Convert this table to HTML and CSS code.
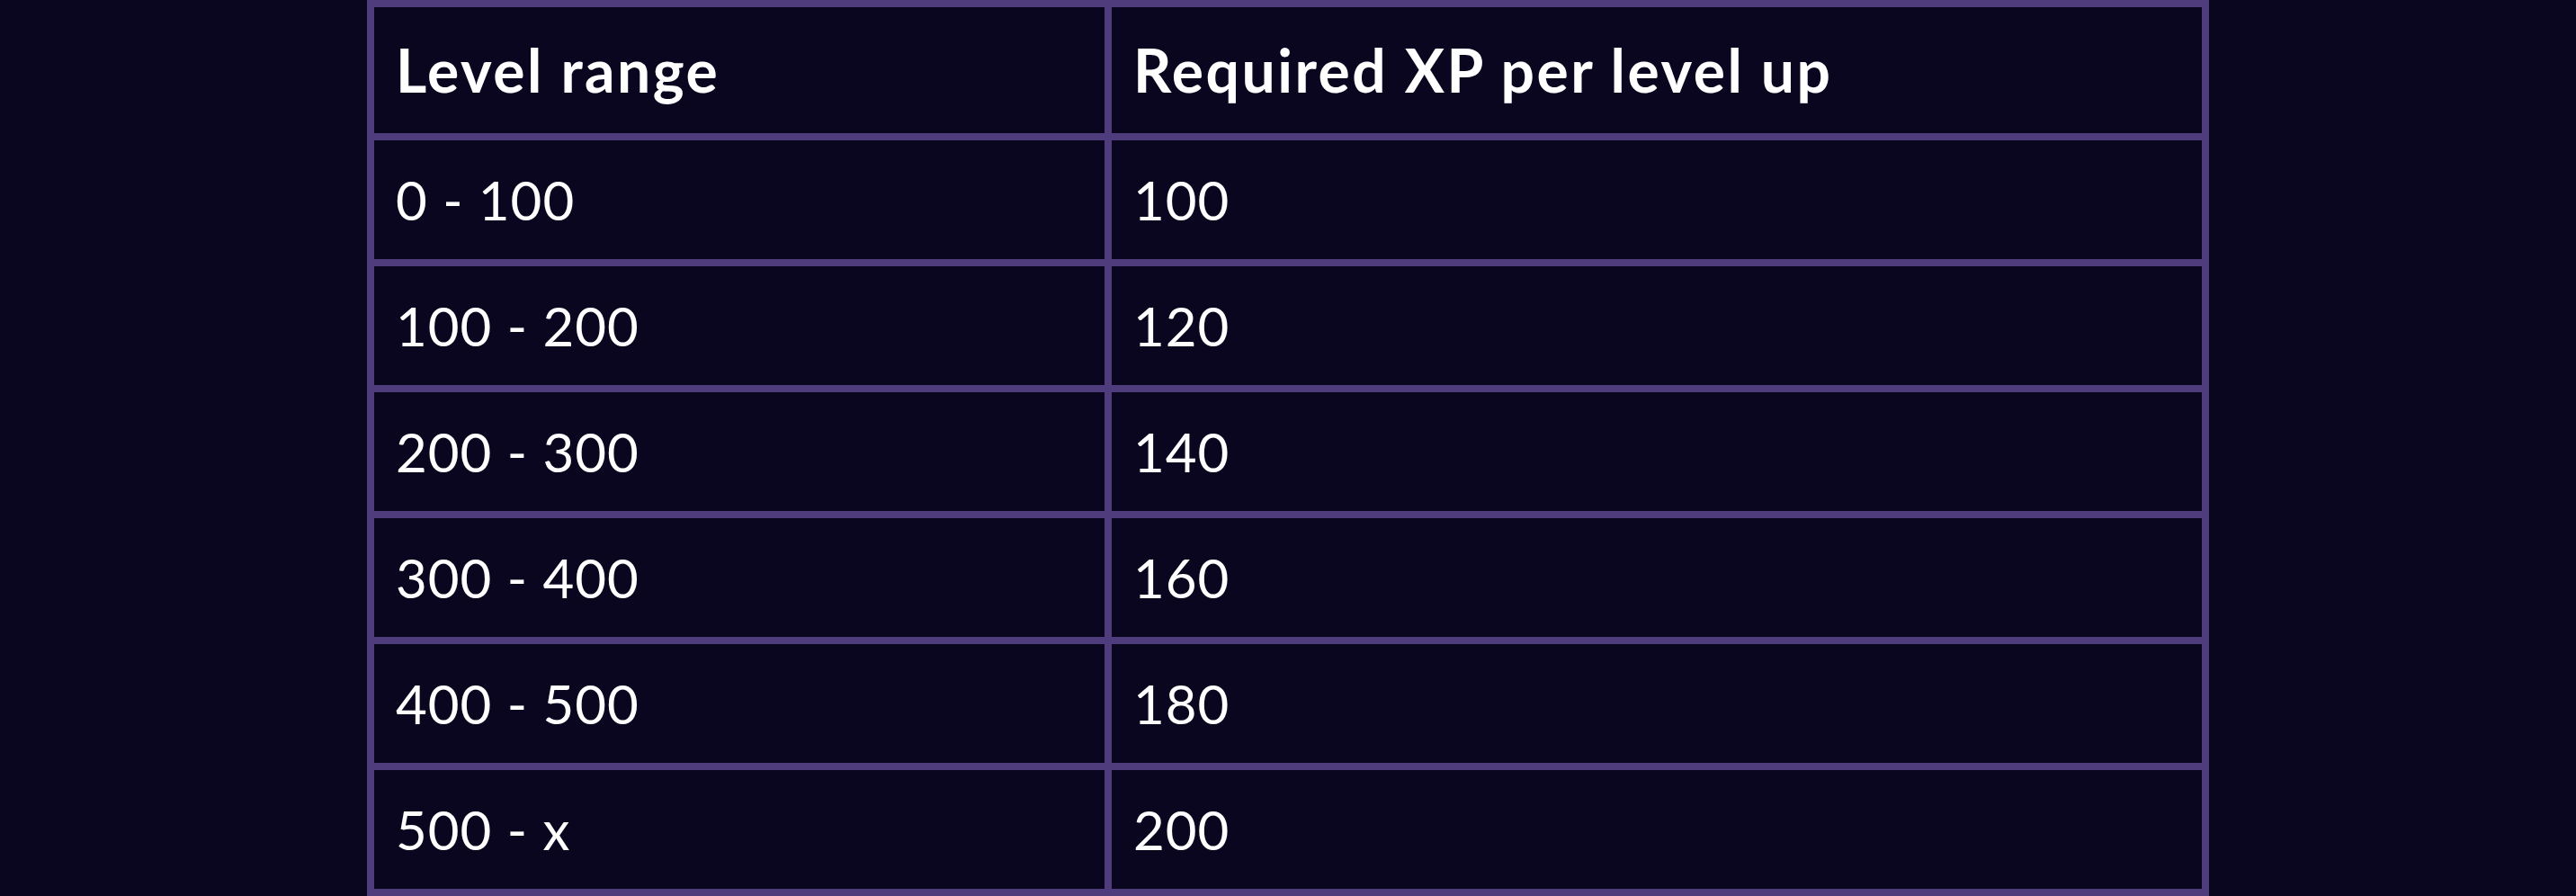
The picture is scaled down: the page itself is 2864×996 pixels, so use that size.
FILE: index.html
```html
<!DOCTYPE html>
<html lang="en">
<head>
<meta charset="utf-8">
<title>Level XP table</title>
<link rel="stylesheet" href="styles.css">
</head>
<body>
<div class="xp-table">
  <div class="cell head">Level range</div>
  <div class="cell head">Required XP per level up</div>
  <div class="cell">0 - 100</div>
  <div class="cell">100</div>
  <div class="cell">100 - 200</div>
  <div class="cell">120</div>
  <div class="cell">200 - 300</div>
  <div class="cell">140</div>
  <div class="cell">300 - 400</div>
  <div class="cell">160</div>
  <div class="cell">400 - 500</div>
  <div class="cell">180</div>
  <div class="cell">500 - x</div>
  <div class="cell">200</div>
</div>
</body>
</html>
```
FILE: styles.css
```css
html, body {
  margin: 0;
  padding: 0;
  background: #0b0620;
}
body {
  font-family: "Lato", "Liberation Sans", sans-serif;
  color: #ffffff;
}
.xp-table {
  width: 2048px;
  margin: 0 auto;
  box-sizing: border-box;
  display: grid;
  grid-template-columns: 812px 1212px;
  grid-template-rows: 140px repeat(6, 132px);
  gap: 8px;
  padding: 8px;
  background: #4e3c7c;
}
.cell {
  background: #0b0620;
  display: flex;
  align-items: center;
  padding: 0 24px;
  font-size: 60px;
  font-weight: 400;
  line-height: 1;
  letter-spacing: 1px;
}
.cell.head {
  font-size: 66px;
  font-weight: 700;
  letter-spacing: 2.5px;
}
```
